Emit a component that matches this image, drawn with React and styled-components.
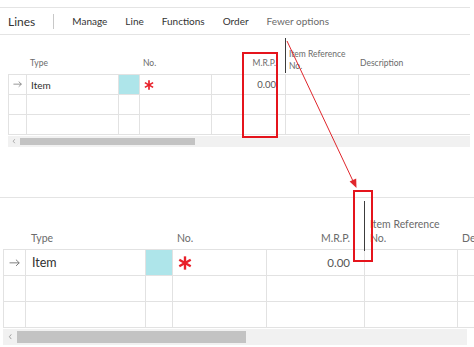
import React from "react";
import styled, { createGlobalStyle } from "styled-components";

const GlobalStyle = createGlobalStyle`
  html, body {
    margin: 0;
    padding: 0;
    background: #ffffff;
  }
  body {
    font-family: Lato, "Open Sans", sans-serif;
    color: #333333;
  }
`;

const Page = styled.div`
  position: relative;
  width: 474px;
  height: 347px;
  overflow: hidden;
  padding-top: 7px;
  box-sizing: border-box;
`;

const TopPanel = styled.section`
  width: 470px;
  border-top: 1px solid #e4e4e4;
`;

const Toolbar = styled.div`
  display: flex;
  align-items: center;
  gap: 18px;
  height: 26px;
  padding-left: 8px;
  border-bottom: 1px solid #e4e4e4;
`;

const Title = styled.span`
  font-size: 12px;
  color: #333;
`;

const Divider = styled.span`
  width: 1px;
  height: 15px;
  background: #c8c8c8;
`;

const Action = styled.span`
  font-size: 10px;
  color: ${(p) => (p.$muted ? "#6a6a6a" : "#333")};
`;

const ZoomPanel = styled.section`
  margin-top: 50px;
  width: 474px;
  border-top: 1px solid #e4e4e4;
  overflow: hidden;
`;

const Table = styled.div`
  margin-left: ${(p) => p.$left}px;
  width: ${(p) => p.$width}px;
`;

const HeadRow = styled.div`
  display: grid;
  grid-template-columns: ${(p) => p.$cols};
  height: ${(p) => p.$h}px;
  align-items: end;
  border-bottom: 1px solid #e2e2e2;
`;

const HeadCell = styled.div`
  position: relative;
  align-self: stretch;
  display: flex;
  align-items: flex-end;
  justify-content: ${(p) => (p.$right ? "flex-end" : "flex-start")};
  padding: 0 ${(p) => p.$pr}px ${(p) => p.$pb}px ${(p) => p.$pl}px;
  font-size: ${(p) => p.$size}px;
  line-height: ${(p) => p.$lh}px;
  color: #6b6b6b;
  white-space: pre;
  overflow: visible;

  &::before {
    content: "";
    display: ${(p) => (p.$resize ? "block" : "none")};
    position: absolute;
    left: 0;
    top: ${(p) => p.$rt}px;
    bottom: ${(p) => p.$rb}px;
    width: 1px;
    background: #3c3c3c;
  }
`;

const Row = styled.div`
  display: grid;
  grid-template-columns: ${(p) => p.$cols};
  height: ${(p) => p.$h}px;
  border-bottom: 1px solid #e2e2e2;
`;

const Cell = styled.div`
  display: flex;
  align-items: center;
  justify-content: ${(p) => (p.$right ? "flex-end" : p.$center ? "center" : "flex-start")};
  padding: 0 ${(p) => p.$pr}px 0 ${(p) => p.$pl}px;
  border-left: 1px solid #e2e2e2;
  background: ${(p) => p.$bg || "transparent"};
  font-size: ${(p) => p.$size}px;
  color: ${(p) => (p.$num ? "#555" : "#2f2f2f")};
  white-space: nowrap;
  overflow: hidden;
`;

const Track = styled.div`
  display: flex;
  align-items: center;
  margin-top: 1px;
  height: ${(p) => p.$h}px;
  width: ${(p) => p.$w}px;
  background: #f1f1f1;
`;

const TrackArrow = styled.span`
  display: flex;
  justify-content: center;
  width: ${(p) => p.$w}px;
  color: #9a9a9a;
`;

const Thumb = styled.div`
  height: ${(p) => p.$h}px;
  background: #c3c3c3;
`;

const RedBox = styled.div`
  position: absolute;
  border: 2px solid #e5141c;
  box-sizing: border-box;
`;

const Annotation = styled.svg`
  position: absolute;
  left: 0;
  top: 0;
  pointer-events: none;
`;

const RowArrow = ({ w }) => (
  <svg width={w} height={w * 0.7} viewBox="0 0 10 7" fill="none" stroke="#6e6e6e" strokeWidth="0.8">
    <line x1="0.5" y1="3.5" x2="9.3" y2="3.5" />
    <polyline points="6.3,0.6 9.3,3.5 6.3,6.4" />
  </svg>
);

const Asterisk = ({ size }) => (
  <svg width={size} height={size} viewBox="-10 -10 20 20">
    <g stroke="#e8202a" strokeWidth="3.4">
      <line x1="0" y1="-9.5" x2="0" y2="9.5" />
      <line x1="-8.2" y1="-4.75" x2="8.2" y2="4.75" />
      <line x1="-8.2" y1="4.75" x2="8.2" y2="-4.75" />
    </g>
  </svg>
);

const ScrollChevron = ({ s }) => (
  <svg width={s} height={s * 1.6} viewBox="0 0 5 8" fill="none" stroke="#9a9a9a" strokeWidth="1">
    <polyline points="3.5,1.5 1.5,4 3.5,6.5" />
  </svg>
);

const variants = {
  compact: {
    left: 8,
    width: 462,
    cols: [18, 92, 21, 72, 74, 73, 112],
    headH: 39,
    rowH: 19,
    headSize: 8.5,
    headLh: 11,
    headPb: 5,
    multiLh: 12,
    multiPb: 2,
    rt: 3,
    rb: 1,
    pads: [0, 4, 0, 4, 9, 4, 2],
    bodySize: 10,
    numSize: 9.5,
    arrow: 9,
    star: 10,
    track: 11,
    thumbH: 7,
    chevron: 12,
    thumbW: 175,
    trackW: 462,
  },
  zoomed: {
    left: 3,
    width: 494,
    cols: [22, 120, 27, 94, 98, 93, 40],
    headH: 51,
    rowH: 25,
    headSize: 10.5,
    headLh: 14,
    headPb: 4,
    multiLh: 14,
    multiPb: 4,
    rt: 3,
    rb: -2,
    pads: [0, 6, 0, 5, 14, 6, 5],
    bodySize: 12.5,
    numSize: 11.5,
    arrow: 11,
    star: 14,
    track: 16,
    thumbH: 12,
    chevron: 14,
    thumbW: 229,
    trackW: 464,
  },
};

const headers = [
  { label: "" },
  { label: "Type" },
  { label: "" },
  { label: "No." },
  { label: "M.R.P.", right: true },
  { label: "Item Reference\nNo.", multi: true, resize: true },
  { label: "Description" },
];

const rows = [
  { current: true, type: "Item", required: true, mrp: "0.00" },
  {},
  {},
];

function LinesTable({ variant }) {
  const v = variants[variant];
  const cols = v.cols.map((c) => `${c}px`).join(" ");
  const p = v.pads;

  return (
    <Table $left={v.left} $width={v.width}>
      <HeadRow $cols={cols} $h={v.headH}>
        {headers.map((h, i) => (
          <HeadCell
            key={i}
            $pl={h.right ? 0 : p[i]}
            $pr={h.right ? p[i] : 0}
            $pb={h.multi ? v.multiPb : v.headPb}
            $lh={h.multi ? v.multiLh : v.headLh}
            $size={v.headSize}
            $right={h.right}
            $resize={h.resize}
            $rt={v.rt}
            $rb={v.rb}
          >
            {h.label}
          </HeadCell>
        ))}
      </HeadRow>
      {rows.map((r, i) => (
        <Row key={i} $cols={cols} $h={v.rowH}>
          <Cell $center $pl={0} $pr={0} $size={v.bodySize}>
            {r.current && <RowArrow w={v.arrow} />}
          </Cell>
          <Cell $pl={p[1]} $pr={0} $size={v.bodySize}>
            {r.type}
          </Cell>
          <Cell $pl={0} $pr={0} $bg={r.current ? "#aee5ea" : null} $size={v.bodySize} />
          <Cell $pl={p[3]} $pr={0} $size={v.bodySize}>
            {r.required && <Asterisk size={v.star} />}
          </Cell>
          <Cell $right $num $pl={0} $pr={p[4]} $size={v.numSize}>
            {r.mrp}
          </Cell>
          <Cell $pl={p[5]} $pr={0} $size={v.bodySize} />
          <Cell $pl={p[6]} $pr={0} $size={v.bodySize} />
        </Row>
      ))}
      <Track $h={v.track} $w={v.trackW}>
        <TrackArrow $w={v.chevron}>
          <ScrollChevron s={v.chevron / 3} />
        </TrackArrow>
        <Thumb $h={v.thumbH} style={{ width: v.thumbW }} />
      </Track>
    </Table>
  );
}

export default function App() {
  return (
    <>
      <GlobalStyle />
      <Page>
        <TopPanel>
          <Toolbar>
            <Title>Lines</Title>
            <Divider />
            <Action>Manage</Action>
            <Action>Line</Action>
            <Action>Functions</Action>
            <Action>Order</Action>
            <Action $muted>Fewer options</Action>
          </Toolbar>
          <LinesTable variant="compact" />
        </TopPanel>

        <ZoomPanel>
          <LinesTable variant="zoomed" />
        </ZoomPanel>

        <RedBox style={{ left: 242, top: 52, width: 36, height: 86 }} />
        <RedBox style={{ left: 353, top: 190, width: 20, height: 72 }} />
        <Annotation width="474" height="347" viewBox="0 0 474 347">
          <line x1="287" y1="41" x2="353" y2="181" stroke="#e0262c" strokeWidth="1" />
          <polygon points="356.5,188 349.6,181.6 356.2,178.6" fill="#e0262c" />
        </Annotation>
      </Page>
    </>
  );
}
